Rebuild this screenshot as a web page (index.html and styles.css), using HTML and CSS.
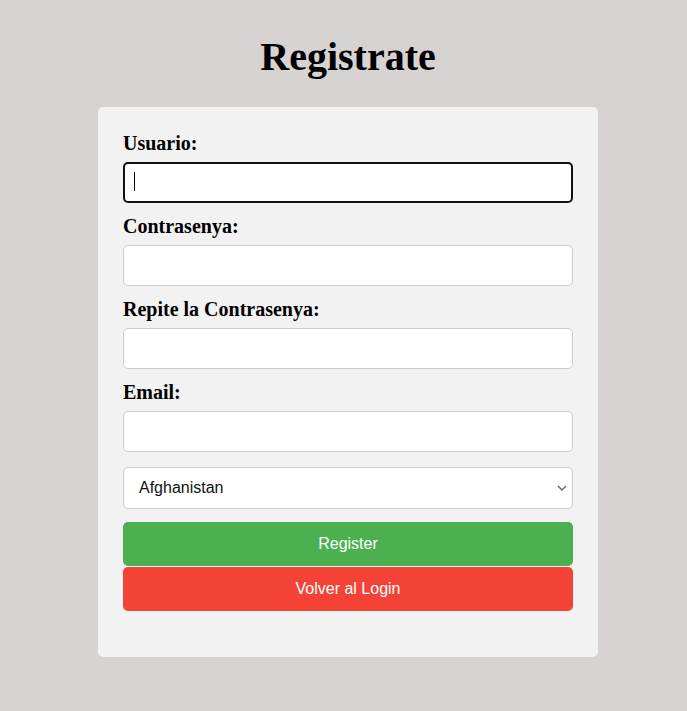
FILE: index.html
```html
<!DOCTYPE html>
<html lang="es">
<head>
  <meta charset="UTF-8">
  <meta name="viewport" content="width=device-width, initial-scale=1.0">
  <title>Registrate</title>
  <link rel="stylesheet" href="styles.css">
</head>
<body>
  <h1>Registrate</h1>

  <div class="register-container">
    <form>
      <label for="usuario">Usuario:</label>
      <div class="field">
        <input type="text" id="usuario" class="active">
        <span class="caret"></span>
      </div>

      <label for="pass">Contrasenya:</label>
      <input type="password" id="pass">

      <label for="pass2">Repite la Contrasenya:</label>
      <input type="password" id="pass2">

      <label for="email">Email:</label>
      <input type="email" id="email">

      <div class="field select-field">
        <select id="pais">
          <option>Afghanistan</option>
          <option>Albania</option>
          <option>Algeria</option>
          <option>Andorra</option>
        </select>
        <svg class="arrow" width="10" height="6" viewBox="0 0 10 6">
          <path d="M1 1 L5 5 L9 1" fill="none" stroke="#666" stroke-width="1.4"/>
        </svg>
      </div>

      <button type="submit" class="btn btn-register">Register</button>
      <button type="button" class="btn btn-back">Volver al Login</button>
    </form>
  </div>
</body>
</html>
```

FILE: styles.css
```css
body {
  font-family: "Liberation Serif", "Times New Roman", serif;
  background-color: #d7d3d2;
  margin: 6px 8px 8px 17px;
  display: flex;
  flex-direction: column;
  align-items: center;
}
h1 {
  font-size: 40px;
  margin: 26.8px 0;
  text-align: center;
}
.register-container {
  width: 450px;
  padding: 25px 25px 46px;
  background-color: #f2f2f2;
  border-radius: 5px;
}
label {
  display: block;
  font-weight: bold;
  font-size: 20px;
  margin-bottom: 7px;
}
.field {
  position: relative;
}
input, select {
  display: block;
  box-sizing: border-box;
  width: 100%;
  height: 41px;
  padding: 10px 15px;
  margin-bottom: 12px;
  border: 1px solid #ccc;
  border-radius: 5px;
  background-color: white;
  font-family: "Liberation Sans", Arial, sans-serif;
  font-size: 16px;
}
input.active {
  border: 2px solid #111;
  outline: none;
}
/* cursor del campo activo */
.caret {
  position: absolute;
  left: 11px;
  top: 10px;
  width: 1px;
  height: 19px;
  background-color: #000;
}
.select-field {
  margin-top: 15px;
}
select {
  -webkit-appearance: none;
  appearance: none;
  height: 42px;
  padding: 10px 15px;
  margin-bottom: 13px;
  color: #111;
}
.arrow {
  position: absolute;
  right: 6px;
  top: 18px;
}
.btn {
  display: block;
  width: 100%;
  height: 44px;
  border: none;
  border-radius: 5px;
  color: white;
  font-family: "Liberation Sans", Arial, sans-serif;
  font-size: 16px;
  cursor: pointer;
}
.btn-register {
  background-color: #4caf50;
  margin-bottom: 1px;
}
.btn-back {
  background-color: #f44336;
}
```
